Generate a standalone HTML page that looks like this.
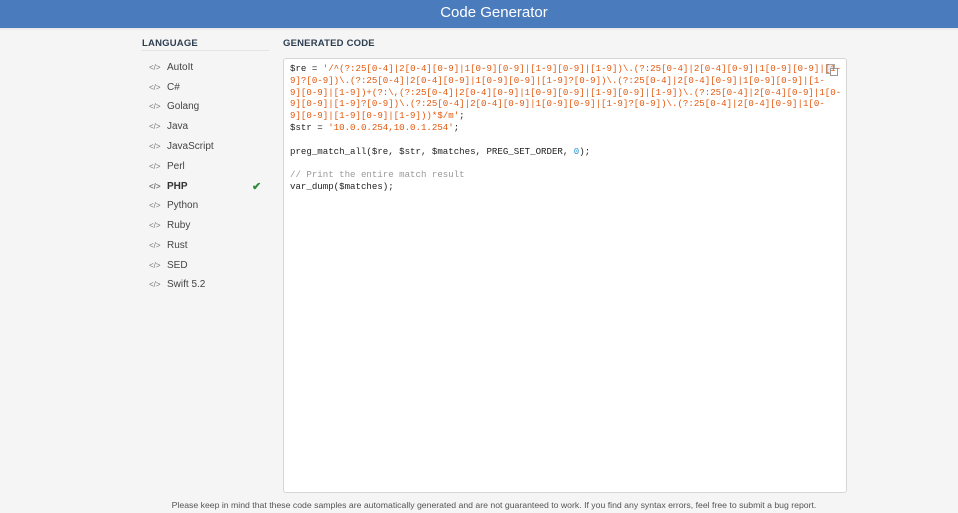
<!DOCTYPE html>
<html><head><meta charset="utf-8"><style>
*{margin:0;padding:0;box-sizing:border-box}
body{width:958px;height:513px;overflow:hidden;background:#f5f5f5;font-family:"Liberation Sans",sans-serif;position:relative}
.hdr{position:absolute;left:0;top:0;width:988px;height:28px;background:#4a7cbd;color:#fff;font-size:15px;text-align:center;line-height:25px}
.shade{position:absolute;left:0;top:28px;width:958px;height:3px;background:linear-gradient(#e6e6e6,#f5f5f5)}
.h{position:absolute;font-size:9.5px;font-weight:bold;color:#2d3e50;letter-spacing:.2px}
.sep{position:absolute;left:141px;top:50px;width:128px;height:1px;background:#e4e4e4}
.item{position:absolute;left:149px;font-size:10px;color:#444;height:14px;line-height:14px}
.item i{font-style:normal;font-size:8px;color:#777;display:inline-block;width:18px}
.item.sel{font-weight:bold;color:#333}
.chk{position:absolute;left:252px;top:180px;color:#2e8b3e;font-size:11px;font-weight:bold}
.box{position:absolute;left:283px;top:58px;width:564px;height:435px;background:#fff;border:1px solid #d6d6d6;border-radius:3px}
pre{position:absolute;left:290px;top:63px;font-family:"Liberation Mono",monospace;font-size:9.1px;line-height:11.8px;color:#222}
.s{color:#e2580e}.n{color:#1c8fd1}.c{color:#999}
.foot{position:absolute;left:0;width:988px;top:500px;text-align:center;font-size:8.7px;color:#555}
.copy{position:absolute;left:826px;top:64px;width:9px;height:10px;border:1px solid #aaa;background:#eee}
.copy2{position:absolute;left:830px;top:68px;width:8px;height:8px;border:1px solid #999;background:#fff}
</style></head><body>
<div class="hdr">Code Generator</div><div class="shade"></div>
<div class="h" style="left:142px;top:38px">LANGUAGE</div>
<div class="h" style="left:283px;top:38px">GENERATED CODE</div>
<div class="sep"></div>
<div class="item" style="top:61px"><i>&lt;/&gt;</i>AutoIt</div>
<div class="item" style="top:81px"><i>&lt;/&gt;</i>C#</div>
<div class="item" style="top:100px"><i>&lt;/&gt;</i>Golang</div>
<div class="item" style="top:120px"><i>&lt;/&gt;</i>Java</div>
<div class="item" style="top:140px"><i>&lt;/&gt;</i>JavaScript</div>
<div class="item" style="top:160px"><i>&lt;/&gt;</i>Perl</div>
<div class="item sel" style="top:180px"><i>&lt;/&gt;</i>PHP</div>
<div class="chk">✔</div>
<div class="item" style="top:199px"><i>&lt;/&gt;</i>Python</div>
<div class="item" style="top:219px"><i>&lt;/&gt;</i>Ruby</div>
<div class="item" style="top:239px"><i>&lt;/&gt;</i>Rust</div>
<div class="item" style="top:259px"><i>&lt;/&gt;</i>SED</div>
<div class="item" style="top:278px"><i>&lt;/&gt;</i>Swift 5.2</div>
<div class="box"></div>
<div class="copy"></div><div class="copy2"></div>
<pre>$re = <span class="s">'/^(?:25[0-4]|2[0-4][0-9]|1[0-9][0-9]|[1-9][0-9]|[1-9])\.(?:25[0-4]|2[0-4][0-9]|1[0-9][0-9]|[1-
9]?[0-9])\.(?:25[0-4]|2[0-4][0-9]|1[0-9][0-9]|[1-9]?[0-9])\.(?:25[0-4]|2[0-4][0-9]|1[0-9][0-9]|[1-
9][0-9]|[1-9])+(?:\,(?:25[0-4]|2[0-4][0-9]|1[0-9][0-9]|[1-9][0-9]|[1-9])\.(?:25[0-4]|2[0-4][0-9]|1[0-
9][0-9]|[1-9]?[0-9])\.(?:25[0-4]|2[0-4][0-9]|1[0-9][0-9]|[1-9]?[0-9])\.(?:25[0-4]|2[0-4][0-9]|1[0-
9][0-9]|[1-9][0-9]|[1-9]))*$/m'</span>;
$str = <span class="s">'10.0.0.254,10.0.1.254'</span>;

preg_match_all($re, $str, $matches, PREG_SET_ORDER, <span class="n">0</span>);

<span class="c">// Print the entire match result</span>
var_dump($matches);</pre>
<div class="foot">Please keep in mind that these code samples are automatically generated and are not guaranteed to work. If you find any syntax errors, feel free to submit a bug report.</div>
</body></html>
